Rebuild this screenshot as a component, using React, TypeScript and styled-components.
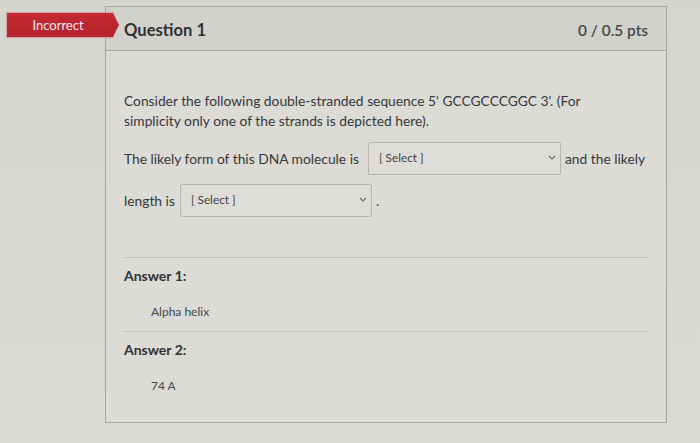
import React from "react";
import styled, { createGlobalStyle } from "styled-components";

const GlobalStyle = createGlobalStyle`
  html, body {
    margin: 0;
    padding: 0;
    background: #d7d6d0;
  }
  body {
    font-family: Lato, "Open Sans", "Liberation Sans", sans-serif;
    color: #34383b;
  }
`;

const Page = styled.div`
  position: relative;
  width: 700px;
  height: 443px;
  box-sizing: border-box;
  padding: 6px 0 0 105px;
  background: linear-gradient(180deg, #d5d4ce 0%, #d9d8d2 60%, #dbdad4 100%);
  overflow: hidden;
`;

const Badge = styled.div`
  position: absolute;
  left: 7px;
  top: 13px;
  width: 106px;
  height: 24px;
  background: linear-gradient(180deg, #c42a33 0%, #b5232c 100%);
  color: #f4e9ea;
  font-size: 13px;
  display: flex;
  align-items: center;
  justify-content: center;
  padding: 0 4px 1px 0;
  box-sizing: border-box;
  box-shadow: 0 0 1px 1px rgba(214, 120, 125, 0.45);
  &::after {
    content: "";
    position: absolute;
    right: -6px;
    top: 0;
    border-top: 12px solid transparent;
    border-bottom: 12px solid transparent;
    border-left: 6px solid #bb2630;
  }
`;

const Card = styled.div`
  width: 562px;
  height: 417px;
  box-sizing: border-box;
  border: 1px solid #a7a6a0;
  background: #dcdbd5;
  display: flex;
  flex-direction: column;
`;

const Header = styled.div`
  height: 44px;
  flex: none;
  box-sizing: border-box;
  border-bottom: 1px solid #a9a8a2;
  background: #d2d1cb;
  display: flex;
  align-items: center;
  justify-content: space-between;
  padding: 2px 18px 0 18px;
`;

const Title = styled.div`
  font-size: 16.6px;
  font-weight: 700;
  color: #2f3235;
`;

const Points = styled.div`
  font-size: 15.4px;
  font-weight: 600;
  color: #45484b;
`;

const Body = styled.div`
  padding: 40px 18px 0 18px;
  display: flex;
  flex-direction: column;
`;

const Prompt = styled.p`
  margin: 0;
  font-size: 13.8px;
  line-height: 20px;
  color: #34383b;
`;

const BlankRows = styled.div`
  margin-top: 11px;
  display: flex;
  flex-direction: column;
  gap: 9px;
`;

const BlankRow = styled.div`
  display: flex;
  align-items: center;
  height: 33px;
  font-size: 13.8px;
  color: #34383b;
  white-space: nowrap;
`;

const SelectBox = styled.div<{ $w: number; $lead: number }>`
  width: ${(p) => p.$w}px;
  height: 100%;
  box-sizing: border-box;
  margin: 0 4px 0 ${(p) => p.$lead}px;
  border: 1px solid #b6b5af;
  border-radius: 2px;
  background: #dedcd6;
  display: flex;
  align-items: center;
  justify-content: space-between;
  padding: 0 4px 2px 10px;
  font-size: 11.8px;
  color: #3f4245;
`;

const Chevron = () => (
  <svg width="8" height="5" viewBox="0 0 8 5" style={{ marginTop: -1 }}>
    <path d="M1 1l3 3l3-3" fill="none" stroke="#66696c" strokeWidth="1.1" />
  </svg>
);

const Answers = styled.div`
  margin-top: 40px;
  display: flex;
  flex-direction: column;
`;

const AnswerBlock = styled.div<{ $last?: boolean }>`
  border-top: 1px solid #c3c2bc;
  padding: 10px 0 ${(p) => (p.$last ? 0 : 11)}px 0;
  display: flex;
  flex-direction: column;
`;

const AnswerLabel = styled.div`
  font-size: 14px;
  font-weight: 700;
  line-height: 16px;
  color: #2f3235;
`;

const AnswerValue = styled.div`
  margin-top: 20px;
  padding-left: 27px;
  font-size: 12px;
  line-height: 16px;
  color: #44474a;
`;

export default function App() {
  return (
    <>
      <GlobalStyle />
      <Page>
        <Badge>Incorrect</Badge>
        <Card>
          <Header>
            <Title>Question 1</Title>
            <Points>0 / 0.5 pts</Points>
          </Header>
          <Body>
            <Prompt>
              Consider the following double-stranded sequence 5' GCCGCCCGGC 3'. (For
              <br />
              simplicity only one of the strands is depicted here).
            </Prompt>
            <BlankRows>
              <BlankRow>
                The likely form of this DNA molecule is
                <SelectBox $w={193} $lead={9}>
                  [ Select ]
                  <Chevron />
                </SelectBox>
                and the likely
              </BlankRow>
              <BlankRow>
                length is
                <SelectBox $w={192} $lead={5}>
                  [ Select ]
                  <Chevron />
                </SelectBox>
                .
              </BlankRow>
            </BlankRows>
            <Answers>
              <AnswerBlock>
                <AnswerLabel>Answer 1:</AnswerLabel>
                <AnswerValue>Alpha helix</AnswerValue>
              </AnswerBlock>
              <AnswerBlock $last>
                <AnswerLabel>Answer 2:</AnswerLabel>
                <AnswerValue>74 A</AnswerValue>
              </AnswerBlock>
            </Answers>
          </Body>
        </Card>
      </Page>
    </>
  );
}
